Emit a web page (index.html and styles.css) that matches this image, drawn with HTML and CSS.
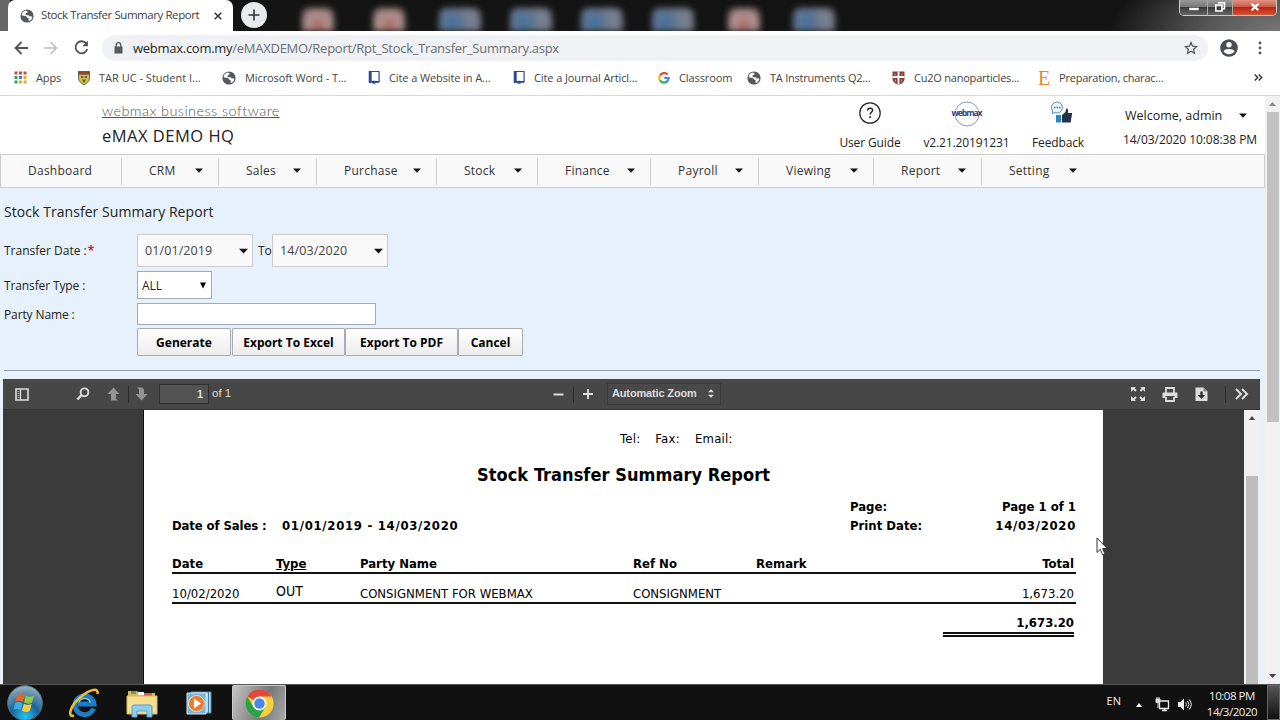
FILE: index.html
```html
<!DOCTYPE html>
<html lang="en">
<head>
  <meta charset="UTF-8" />
  <title>Stock Transfer Summary Report</title>
  <link rel="stylesheet" href="styles.css">
</head>
<body>
  <svg class="defs" width="0" height="0">
    <symbol id="globe" viewBox="0 0 14 14">
      <circle cx="7" cy="7" r="6.6" fill="#55585c"/>
      <path d="M2 4.2C3 2.6 4.5 1.7 6 1.6l1.6 1-.3 1.2-1.6.5-.3 1.3 1.3.6h2l1 1.2 1.7-.2.9.8c-.3 2-1.6 3.5-3.3 4l-.6-1.6.4-1.2-1.5-.5-.9-1.5-2.6-.5L1.7 6.300z" fill="#fff"/>
      <path d="M8.200 1.500l2.500 1.400-1 1.300-1.500-.6z" fill="#55585c"/>
    </symbol>
    <symbol id="book" viewBox="0 0 13 15">
      <path d="M1.500 1h10.500v11H3a1.500 1.500 0 0 0-1.500 1.500z" fill="#fff" stroke="#2c4a94" stroke-width="1.300"/>
      <path d="M1 1h3v11H1z" fill="#2c4a94"/>
      <path d="M1.500 12.500h10.500" stroke="#2c4a94" stroke-width="1.500"/>
      <path d="M5 11h3v4l-1.500-1.200L5 15z" fill="#2c4a94"/>
    </symbol>
    <symbol id="caret" viewBox="0 0 8 5"><path d="M0 .5h8L4 4.800z" fill="#111"/></symbol>
  </svg>

  <!-- Window title bar -->
  <div class="titlebar">
    <div class="tab">
      <svg width="14" height="14"><use href="#globe"/></svg>
      <span class="tab-title">Stock Transfer Summary Report</span>
      <svg width="8" height="8" viewBox="0 0 8 8"><path d="M.7.7l6.600 6.600M7.300.7L.7 7.300" stroke="#333" stroke-width="1.500"/></svg>
    </div>
    <div class="new-tab">
      <svg width="12" height="12" viewBox="0 0 12 12"><path d="M6 .5v11M.5 6h11" stroke="#333" stroke-width="1.600"/></svg>
    </div>
    <div class="behind">
      <i class="pdf"></i><i class="pdf"></i><i></i><i></i><i></i><i></i><i class="pdf"></i><i></i>
    </div>
    <div class="win-buttons">
      <span class="min"><svg width="12" height="6" viewBox="0 0 12 6"><path d="M1 1.500h10v3H1z" fill="#fff" stroke="#444" stroke-width=".6"/></svg></span>
      <span class="max"><svg width="12" height="12" viewBox="0 0 12 12"><path d="M4 1.800h6.500v6H8.500M1.800 4h6.200v6H1.800z" fill="none" stroke="#fff" stroke-width="1.600"/></svg></span>
      <span class="close"><svg width="10" height="8" viewBox="0 0 10 8"><path d="M1.500.7l7 6.600M8.500.7l-7 6.600" stroke="#fff" stroke-width="2.300"/></svg></span>
    </div>
  </div>

  <!-- Address bar -->
  <div class="toolbar">
    <div class="nav-icons">
      <svg width="14" height="14" viewBox="0 0 14 14"><path d="M14 7H1.500M7.500 1L1.500 7l6 6" fill="none" stroke="#505358" stroke-width="1.800"/></svg>
      <svg width="14" height="14" viewBox="0 0 14 14"><path d="M0 7h12.500M6.500 1l6 6-6 6" fill="none" stroke="#bcbec1" stroke-width="1.600"/></svg>
      <svg width="15" height="15" viewBox="0 0 15 15"><path d="M12.300 3.600A6 6 0 1 0 13.300 9" fill="none" stroke="#505358" stroke-width="1.800"/><path d="M13.900.8v5.500H8.400z" fill="#505358"/></svg>
    </div>
    <div class="omnibox">
      <svg width="9" height="12" viewBox="0 0 9 12"><path d="M.5 4.500h8V11.500h-8z" fill="#55585c"/><path d="M2.200 5V3a2.300 2.300 0 0 1 4.600 0v2" fill="none" stroke="#55585c" stroke-width="1.300"/></svg>
      <span class="url"><b>webmax.com.my</b>/eMAXDEMO/Report/Rpt_Stock_Transfer_Summary.aspx</span>
      <svg width="14" height="14" viewBox="0 0 14 14"><path d="M7 1.500l1.600 3.700 4 .4-3 2.700.9 4L7 10.200l-3.500 2.100.9-4-3-2.700 4-.4z" fill="none" stroke="#505358" stroke-width="1.200"/></svg>
    </div>
    <svg class="avatar" width="18" height="18" viewBox="0 0 18 18"><circle cx="9" cy="9" r="8.800" fill="#4a4d51"/><circle cx="9" cy="5.800" r="2.700" fill="#fff"/><path d="M3.500 12.200c1.500-3 9.500-3 11 0-2.500 4-8.500 4-11 0z" fill="#fff"/></svg>
    <svg width="4" height="14" viewBox="0 0 4 14"><g fill="#505358"><circle cx="2" cy="2" r="1.400"/><circle cx="2" cy="7" r="1.400"/><circle cx="2" cy="12" r="1.400"/></g></svg>
  </div>

  <div class="bookmarks">
    <span><svg width="13" height="13" viewBox="0 0 13 13"><path d="M.5.5h3v3h-3zM5 .5h3v3H5zM9.500.5h3v3h-3z" fill="#d8453a"/><path d="M.5 5h3v3h-3z" fill="#3c9d55"/><path d="M5 5h3v3H5z" fill="#3b7de0"/><path d="M9.500 5h3v3h-3zM9.500 9.500h3v3h-3zM5 9.500h3v3H5z" fill="#e6ac25"/><path d="M.5 9.500h3v3h-3z" fill="#3c9d55"/></svg>Apps</span>
    <span class="wide"><svg width="12" height="14" viewBox="0 0 12 14"><path d="M.5.5h11V7c0 3.500-3 5.500-5.500 6.700C3.500 12.500.5 10.500.5 7z" fill="#e3bd35" stroke="#5b6a55"/><path d="M.5.5h11v3.300H.5z" fill="#8d4935"/><path d="M3 5h2.300v2H3zM6.700 5H9v2H6.700z" fill="#27699a"/><path d="M4 8.500h4L6 12z" fill="#3e5a45"/></svg>TAR UC - Student I...</span>
    <span><svg width="14" height="14"><use href="#globe"/></svg>Microsoft Word - T...</span>
    <span><svg width="12" height="15"><use href="#book"/></svg>Cite a Website in A...</span>
    <span><svg width="12" height="15"><use href="#book"/></svg>Cite a Journal Articl...</span>
    <span><svg width="12" height="12" viewBox="0 0 12 12" fill="none" stroke-width="2.200"><path d="M9.700 2.600A4.700 4.700 0 0 0 2 3.600" stroke="#ea4335"/><path d="M2 3.500a4.700 4.700 0 0 0 0 5" stroke="#fbbc05"/><path d="M2 8.400a4.700 4.700 0 0 0 7.200 1" stroke="#34a853"/><path d="M9 9.600c1.200-1 1.700-2.200 1.700-3.600H6.200" stroke="#4285f4"/></svg>Classroom</span>
    <span class="tight"><svg width="14" height="14"><use href="#globe"/></svg>TA Instruments Q2...</span>
    <span class="tight"><svg width="13" height="14" viewBox="0 0 13 14"><path d="M.5.5h12V8c0 3-3.500 5-6 5.700C4 13 .5 11 .5 8z" fill="#8e3d3a"/><path d="M6.500.5v13M.5 6h12" stroke="#fff" stroke-width="1.800"/><path d="M3 2.500v2M10 2.500v2M3.500 8.500v2M9.500 8.500v2" stroke="#c9a19c"/></svg>Cu2O nanoparticles...</span>
    <span class="tight"><em>E</em>Preparation, charac...</span>
    <span class="more"><svg width="9" height="7" viewBox="0 0 9 7"><path d="M.7.5l3 3-3 3M4.700.5l3 3-3 3" fill="none" stroke="#333" stroke-width="1.400"/></svg></span>
  </div>

  <!-- Page content -->
  <div class="viewport">
    <div class="page">
      <div class="header">
        <div class="brand">
          <a>webmax business software</a>
          <span>eMAX DEMO HQ</span>
        </div>
        <div class="tool guide">
          <svg width="24" height="24" viewBox="0 0 24 24"><circle cx="12" cy="12" r="10.200" fill="none" stroke="#222" stroke-width="1.200"/><path d="M9.600 9.600c0-3.400 5-3.100 5-.3 0 2-2.500 2-2.500 4.300" fill="none" stroke="#222" stroke-width="1.500"/><circle cx="12.100" cy="16" r="1" fill="#222"/></svg>
          <span>User Guide</span>
        </div>
        <div class="tool version">
          <svg width="34" height="26" viewBox="0 0 34 26"><circle cx="17" cy="13" r="12" fill="none" stroke="#8799b7" stroke-width="1"/><path d="M1 9.500h32v5H1z" fill="#fff"/><text x="17" y="14.500" text-anchor="middle" textLength="31" class="logo-text">webmax</text></svg>
          <span>v2.21.20191231</span>
        </div>
        <div class="tool feedback">
          <svg width="24" height="24" viewBox="0 0 24 24"><path d="M4 11.500L2.500 13l.2-3A5.500 5.500 0 1 1 7 12z" fill="#eef7fc" stroke="#4a94bd"/><path d="M4 6.500h1.500M6.500 6.500H8M9 6.500h1.500" stroke="#2876a8" stroke-width="1.300"/><path d="M6 14h5v7.500H6z" fill="#2b86be"/><path d="M12 14l3.500-3 .7-3.500c2-.2 2.300 1.800 1.600 4.500h4.400l-1.600 9.500H12z" fill="#21344c"/></svg>
          <span>Feedback</span>
        </div>
        <div class="user">
          <div>Welcome, admin <svg width="8" height="5"><use href="#caret"/></svg></div>
          <span>14/03/2020 10:08:38 PM</span>
        </div>
      </div>

      <div class="menu">
        <div>Dashboard</div>
        <div>CRM <svg width="8" height="5"><use href="#caret"/></svg></div>
        <div>Sales <svg width="8" height="5"><use href="#caret"/></svg></div>
        <div>Purchase <svg width="8" height="5"><use href="#caret"/></svg></div>
        <div>Stock <svg width="8" height="5"><use href="#caret"/></svg></div>
        <div>Finance <svg width="8" height="5"><use href="#caret"/></svg></div>
        <div>Payroll <svg width="8" height="5"><use href="#caret"/></svg></div>
        <div>Viewing <svg width="8" height="5"><use href="#caret"/></svg></div>
        <div>Report <svg width="8" height="5"><use href="#caret"/></svg></div>
        <div>Setting <svg width="8" height="5"><use href="#caret"/></svg></div>
      </div>

      <div class="form">
        <h1>Stock Transfer Summary Report</h1>
        <div class="row dates">
          <label>Transfer Date : <b>*</b></label>
          <div class="date">01/01/2019 <svg width="9" height="6"><use href="#caret"/></svg></div>
          <span class="to">To</span>
          <div class="date">14/03/2020 <svg width="9" height="6"><use href="#caret"/></svg></div>
        </div>
        <div class="row type">
          <label>Transfer Type :</label>
          <div class="select">ALL <svg width="6" height="7" viewBox="0 0 6 7"><path d="M0 .5h6L3 6.500z"/></svg></div>
        </div>
        <div class="row party">
          <label>Party Name :</label>
          <input type="text">
        </div>
        <div class="row actions">
          <button class="b1">Generate</button>
          <button class="b2">Export To Excel</button>
          <button class="b2">Export To PDF</button>
          <button class="b3">Cancel</button>
        </div>
      </div>

      <!-- PDF viewer -->
      <div class="viewer">
        <div class="pdf-bar">
          <svg class="side" width="14" height="13" viewBox="0 0 14 13"><path d="M1 1h12v11H1z" fill="none" stroke="#ddd" stroke-width="1.600"/><path d="M5.500 1v11" stroke="#ddd" stroke-width="1.200"/><path d="M2.500 3.500h2M2.500 5.500h2M2.500 7.500h2M2.500 9.500h2" stroke="#aaa"/></svg>
          <svg class="find" width="14" height="14" viewBox="0 0 14 14"><circle cx="8.500" cy="5.300" r="3.900" fill="none" stroke="#ddd" stroke-width="1.900"/><path d="M5.500 8.200L1.300 12.500" stroke="#ddd" stroke-width="2.400"/></svg>
          <svg class="up" width="13" height="14" viewBox="0 0 13 14"><path d="M6.500.5l6 6.500H9v4.500l2 2H4V7H.5z" fill="#949494"/></svg>
          <i></i>
          <svg class="down" width="13" height="14" viewBox="0 0 13 14"><path d="M6.500 13.500l6-6.500H9V2.500L7 .5H2l2 2V7H.5z" fill="#949494"/></svg>
          <span class="page-no">1</span>
          <span class="page-of">of 1</span>
          <svg class="minus" width="11" height="11" viewBox="0 0 11 11"><path d="M.5 5.500h10" stroke="#ddd" stroke-width="2"/></svg>
          <i></i>
          <svg class="plus" width="10" height="10" viewBox="0 0 10 10"><path d="M0 5h10M5 0v10" stroke="#ddd" stroke-width="1.900"/></svg>
          <span class="zoom">Automatic Zoom <svg width="6" height="9" viewBox="0 0 6 9"><path d="M0 3.300h6L3 .3zM0 5.700h6L3 8.700z" fill="#ddd"/></svg></span>
          <div class="pdf-tools">
            <svg width="14" height="14" viewBox="0 0 14 14"><path d="M0 0h5L3.700 1.300l2 2-1.400 1.400-2-2L0 5zM14 0v5l-1.900-2.300-2 2-1.400-1.400 2-2L9 0zM0 14V9l2.300 2.300 2-2 1.400 1.400-2 2L5 14zM14 14H9l1.300-1.300-2-2 1.400-1.400 2 2L14 9z" fill="#ddd"/></svg>
            <svg width="16" height="15" viewBox="0 0 16 15"><path d="M4 6V1h8v5M4 10v4h8v-4" fill="none" stroke="#ddd" stroke-width="1.800"/><path d="M1.500 5.500h13q1 0 1 1V11h-3V9h-9v2H.5V6.500q0-1 1-1z" fill="#ddd"/></svg>
            <svg width="13" height="15" viewBox="0 0 13 15"><path d="M.5.5h8l4 4V14H.5z" fill="#ddd"/><path d="M8.500.5v4h4" fill="#888"/><path d="M5.300 4.500h2.400V8h2.500l-3.700 4-3.700-4h2.500z" fill="#333"/></svg>
            <i></i>
            <svg width="14" height="12" viewBox="0 0 14 12"><path d="M1 1l5 5-5 5M7 1l5 5-5 5" fill="none" stroke="#ddd" stroke-width="2"/></svg>
          </div>
        </div>
        <div class="pdf-body">
          <div class="sheet">
            <div class="contact"><span>Tel:</span><span>Fax:</span><span>Email:</span></div>
            <h2>Stock Transfer Summary Report</h2>
            <div class="meta">
              <div></div><div></div><div>Page:</div><div class="num">Page 1 of 1</div>
              <div class="sales">Date of Sales :</div><div class="spaced">01/01/2019 - 14/03/2020</div><div>Print Date:</div><div class="num spaced">14/03/2020</div>
            </div>
            <div class="line head">
              <div>Date</div><div><u>Type</u></div><div>Party Name</div><div>Ref No</div><div>Remark</div><div class="num">Total</div>
            </div>
            <div class="line item">
              <div>10/02/2020</div><div class="out">OUT</div><div>CONSIGNMENT FOR WEBMAX</div><div>CONSIGNMENT</div><div></div><div class="num">1,673.20</div>
            </div>
            <div class="total">1,673.20</div>
          </div>
          <div class="pdf-scroll">
            <svg width="6" height="4" viewBox="0 0 6 4"><path d="M3 0l3 4H0z" fill="#444"/></svg>
            <div></div>
          </div>
        </div>
      </div>
    </div>
    <div class="scroll">
      <svg width="7" height="4" viewBox="0 0 7 4"><path d="M3.500 0L7 4H0z" fill="#888"/></svg>
      <div></div>
      <svg width="7" height="4" viewBox="0 0 7 4"><path d="M3.500 4L0 0h7z" fill="#444"/></svg>
    </div>
  </div>

  <div class="taskbar">
    <svg class="orb" width="36" height="36" viewBox="0 0 36 36">
      <defs><radialGradient id="orb-bg" cy=".9" r=".9"><stop offset="0" stop-color="#25c5f2"/><stop offset=".45" stop-color="#17649c"/><stop offset="1" stop-color="#9eb1bd"/></radialGradient></defs>
      <circle cx="18" cy="18" r="17.300" fill="url(#orb-bg)" stroke="#51758b"/>
      <path d="M10 10.500c2.500-2 5-2 7.500-.5L15.800 17c-2.500-1.500-5-1.500-7.300-.2z" fill="#ee6428"/>
      <path d="M18.700 10.600c2.300 1.500 5 1.700 8.300.2L25 17.800c-2.700 1.300-5.300 1-8-.3z" fill="#94c83e"/>
      <path d="M8.200 18c2.500-1.300 5-1.300 7.300.2l-1.700 7c-2.500-1.500-5-1.700-7.600-.4z" fill="#3caee8"/>
      <path d="M16.700 18.800c2.600 1.300 5.300 1.500 8 .3l-2 7c-2.700 1.300-5 1.200-7.700-.3z" fill="#fccb3b"/>
    </svg>
    <svg class="ie" width="32" height="30" viewBox="0 0 32 30">
      <path d="M25.500 20.500A9.500 9.500 0 1 1 26 16H10" fill="none" stroke="#1d7cc4" stroke-width="5"/>
      <path d="M11 14.500c1-5.500 10-5.500 11.500 0" fill="none" stroke="#73c8f2" stroke-width="1.500"/>
      <path d="M6 27.500C-1 30 2 18 12 9.500S31-1 29.500 6" fill="none" stroke="#edbd33" stroke-width="2.600"/>
    </svg>
    <svg class="folder" width="32" height="30" viewBox="0 0 32 30">
      <path d="M2 3h9l2 2h16v7H2z" fill="#d9b960"/><path d="M5 3h5v3H5z" fill="#64a647"/><path d="M12 4h6v3h-6z" fill="#fff"/><path d="M18 5h8v3h-8z" fill="#d95c47"/>
      <path d="M1 8h30v18H1z" fill="#f5df91" stroke="#d9ba61"/>
      <path d="M6 29V19q0-2 2-2h16q2 0 2 2v10h-5v-6H11v6z" fill="#8fcdf0" stroke="#5d9fc9"/>
    </svg>
    <svg class="wmp" width="26" height="26" viewBox="0 0 26 26">
      <path d="M5 2h20v21H5z" fill="#b9dcee" stroke="#4e88ad"/><path d="M22.500 2v21" stroke="#3e7ba5"/>
      <path d="M1 3h19v21H1z" fill="#78b5da" stroke="#cfe7f4"/>
      <circle cx="10.500" cy="13.500" r="8" fill="#f07c26" stroke="#fff" stroke-width=".7"/><path d="M8 8.500l7 5-7 5z" fill="#fff"/>
    </svg>
    <div class="active-app">
      <svg width="29" height="29" viewBox="0 0 28 28">
        <circle cx="14" cy="14" r="13.600" fill="#f8cf3d"/>
        <path d="M14 14L2.200 7.200A13.600 13.600 0 0 1 25.800 7.200H14z" fill="#dd4b3e"/>
        <path d="M2.200 7.200A13.600 13.600 0 0 0 13.500 27.600L19.800 17.300 8.200 17.400z" fill="#2ba14b"/>
        <circle cx="14" cy="14" r="6.700" fill="#fff"/><circle cx="14" cy="14" r="5.100" fill="#4b86e8"/>
      </svg>
    </div>
    <div class="tray">
      <span class="lang">EN</span>
      <svg class="tri" width="6" height="4" viewBox="0 0 6 4"><path d="M3 0l3 4H0z" fill="#fff"/></svg>
      <svg class="net" width="15" height="15" viewBox="0 0 15 15"><path d="M5 4h8.500v7.500H4.500V6M7 13.500h5M9.500 11v2" fill="none" stroke="#eee" stroke-width="1.300"/><path d="M1 2h4v3.500H1zM2 0v2M4 0v2M3 5v6" fill="#ddd" stroke="#ddd"/></svg>
      <svg class="vol" width="15" height="15" viewBox="0 0 15 15"><path d="M1 5h2.500L7 1.500v12L3.500 10H1z" fill="#eee"/><path d="M8.700 5.500q1.600 2 0 4M10.500 4q3 3.500 0 7M12.300 2.500q4 5 0 10" fill="none" stroke="#eee"/></svg>
      <div class="clock">10:08 PM<br>14/3/2020</div>
      <div class="show-desktop"></div>
    </div>
  </div>

  <svg class="cursor" width="13" height="20" viewBox="0 0 13 20"><path d="M1 1v14.500l3.300-3.200 2.300 5.500 2.300-1-2.300-5.300h4.600z" fill="#fff" stroke="#333"/></svg>
</body>
</html>
```
FILE: styles.css
```css
* {
  box-sizing: border-box;
}

body {
  margin: 0;
  width: 1280px;
  height: 720px;
  overflow: hidden;
  font-family: "Open Sans", "Noto Sans", sans-serif;
  font-size: 12px;
  color: #222;
  background: #fff;
  display: flex;
  flex-direction: column;
}

svg {
  display: block;
  flex: none;
}

.defs {
  position: absolute;
}

/* title bar */
.titlebar {
  height: 31px;
  flex: none;
  display: flex;
  background: linear-gradient(90deg, #666 0, #666 10px, transparent 10px),
    radial-gradient(ellipse 170px 70px at 1280px 31px, #777 0, #555 45%, #141414 100%);
}

.tab {
  width: 225px;
  margin-left: 8px;
  padding: 0 11px 0 12px;
  border-radius: 7px 7px 0 0;
  background: #fff;
  display: flex;
  align-items: center;
}

.tab-title {
  width: 158px;
  margin: 0 15px 2px 7px;
  font-size: 11.5px;
  letter-spacing: -0.43px;
  white-space: nowrap;
  color: #3c4043;
}

.new-tab {
  width: 26px;
  height: 26px;
  margin: 2px 0 0 8px;
  border-radius: 50%;
  background: #e8eaee;
  display: flex;
  align-items: center;
  justify-content: center;
}

.behind {
  display: flex;
  align-items: flex-end;
  gap: 29px;
  padding-left: 30px;
  width: 912px;
  overflow: hidden;
}

.behind i {
  width: 42px;
  height: 23px;
  border-radius: 8px 8px 0 0;
  background: radial-gradient(circle at 30% 60%, #42709f 0, #63768f 35%, #7b8191 60%, #6f7583 100%);
  filter: blur(3px);
}

.behind i.pdf {
  width: 32px;
  margin: 0 5px;
  background: radial-gradient(circle at 50% 75%, #a8635e 0, #b09493 45%, #85696a 100%);
}

.behind i:last-child {
  margin-left: -1px;
}

.win-buttons {
  height: 16px;
  width: 98px;
  display: flex;
  border: 1px solid #ccc;
  border-top: 0;
  border-radius: 0 0 5px 5px;
  overflow: hidden;
}

.win-buttons span {
  display: flex;
  align-items: center;
  justify-content: center;
  background: linear-gradient(#999 0, #777 45%, #3c3c3e 50%, #666 100%);
  border-right: 1px solid #aaa;
  width: 28px;
  padding-bottom: 2px;
}

.win-buttons .min {
  padding-top: 4px;
}

.win-buttons .max {
  width: 25px;
}

.win-buttons .close {
  flex: 1;
  border: 0;
  background: linear-gradient(#e19384 0, #cf5a44 45%, #b52711 50%, #d85335 100%);
}

/* address bar */
.toolbar {
  height: 33px;
  flex: none;
  display: flex;
  align-items: center;
  padding: 0 18px 0 14px;
}

.nav-icons {
  display: flex;
  align-items: center;
  gap: 16px;
  width: 88px;
}

.omnibox {
  width: 1106px;
  height: 26px;
  border-radius: 13px;
  background: #eff1f4;
  display: flex;
  align-items: center;
  padding: 0 10px 0 12px;
}

.url {
  flex: 1;
  margin-left: 10px;
  font-size: 13px;
  letter-spacing: -0.27px;
  color: #6b6e72;
}

.url b {
  font-weight: normal;
  color: #26282b;
}

.avatar {
  margin: 0 auto 0 12px;
}

.bookmarks {
  height: 32px;
  flex: none;
  padding: 0 0 4px 14px;
  border-bottom: 1px solid #d9d9d9;
  display: grid;
  grid-template-columns: 64px 144px 146px 145px 145px 89px 145px 146px 216px auto;
  align-items: center;
  font-size: 11px;
  letter-spacing: -0.1px;
  color: #444;
  white-space: nowrap;
}

.bookmarks span {
  display: flex;
  align-items: center;
  gap: 9px;
}

.bookmarks .wide {
  letter-spacing: 0;
}

.bookmarks .tight {
  letter-spacing: -0.22px;
}

.bookmarks em {
  width: 12px;
  font: 20px/20px "Liberation Serif", serif;
  color: #e08a33;
}

/* page */
.viewport {
  height: 588px;
  flex: none;
  display: flex;
}

.page {
  width: 1265px;
  display: flex;
  flex-direction: column;
  background: #e7f1fb;
}

.header {
  height: 58px;
  flex: none;
  display: flex;
  background: #fff;
}

.brand {
  width: 724px;
  padding-left: 102px;
}

.brand a {
  display: block;
  margin-top: 5px;
  font: 300 14.5px/19px Lato, sans-serif;
  letter-spacing: 0.43px;
  color: #555;
  text-decoration: underline;
}

.brand span {
  display: block;
  line-height: 22px;
  margin-top: 5px;
  font-size: 16.5px;
  letter-spacing: 0.5px;
}

.tool {
  display: flex;
  flex-direction: column;
  align-items: center;
  justify-content: space-between;
  padding: 5px 0 2px;
  white-space: nowrap;
}

.tool span {
  line-height: 19px;
  letter-spacing: -0.12px;
}

.guide {
  width: 92px;
  margin-left: 100px;
}

.version {
  width: 101px;
}

.feedback {
  width: 82px;
}

.feedback svg {
  margin-left: 8px;
}

.logo-text {
  font: bold 8.5px "Open Sans", sans-serif;
  fill: #26408b;
}

.user {
  margin-left: 24px;
  padding-top: 9px;
  white-space: nowrap;
}

.user div {
  display: flex;
  justify-content: space-between;
  align-items: center;
  width: 122px;
  margin-left: 2px;
  height: 20px;
  font-size: 12.5px;
}

.user span {
  display: block;
  margin-top: 5px;
  line-height: 20px;
  letter-spacing: -0.06px;
}

.menu {
  height: 34px;
  flex: none;
  display: grid;
  grid-template-columns: 121px 97px 98px 120px 101px 113px 108px 115px 108px 110px;
  align-items: center;
  border: 1px solid #ccc;
  background: #f9f9f9;
  letter-spacing: 0.25px;
  color: #333;
}

.menu div {
  height: 27px;
  display: flex;
  align-items: center;
  justify-content: space-between;
  padding: 0 15px 1px 27px;
  border-right: 1px solid #ccc;
}

.menu div:last-child {
  border: 0;
}

.form {
  height: 183px;
  flex: none;
  margin: 0 5px 0 4px;
  border-bottom: 1px solid #929dab;
}

.form h1 {
  margin: 12px 0 11px;
  font-size: 14px;
  font-weight: normal;
  line-height: 23px;
  letter-spacing: 0.06px;
}

.row {
  display: flex;
  align-items: center;
}

.row label {
  width: 133px;
}

.row label b {
  color: #d9222a;
  margin-left: -2px;
}

.dates {
  height: 33px;
}

.date {
  width: 116px;
  height: 33px;
  padding: 0 4px 0 7px;
  border: 1px solid #ccc;
  background: #f9f9f9;
  display: flex;
  align-items: center;
  justify-content: space-between;
  font-size: 12.5px;
  letter-spacing: 0.1px;
  color: #444;
}

.to {
  width: 19px;
  padding-left: 5px;
}

.type {
  margin-top: 4px;
  height: 28px;
}

.type label,
.party label {
  letter-spacing: -0.12px;
}

.select {
  width: 75px;
  height: 28px;
  padding: 0 5px 0 4px;
  border: 1px solid #a3a9b0;
  background: #fff;
  display: flex;
  align-items: center;
  justify-content: space-between;
}

.party {
  margin-top: 4px;
  height: 22px;
}

.party input {
  width: 239px;
  height: 22px;
  border: 1px solid #a3a9b0;
  background: #fff;
}

.actions {
  margin-top: 3px;
  padding-left: 133px;
}

.actions button {
  height: 28px;
  padding: 0;
  border: 1px solid #a9adb2;
  border-radius: 1px;
  background: linear-gradient(#fff, #ececec);
  font: bold 12px "Open Sans", sans-serif;
  color: #000;
}

.actions .b1 {
  width: 94px;
  margin-right: 1px;
}

.actions .b2 {
  width: 113px;
}

.actions .b3 {
  width: 65px;
}

/* pdf viewer */
.viewer {
  margin: 8px 5px 0 3px;
  flex: 1;
  display: flex;
  flex-direction: column;
  min-height: 0;
}

.pdf-bar {
  height: 31px;
  flex: none;
  display: flex;
  align-items: center;
  padding: 0 11px 0 12px;
  background: #474747;
  border-bottom: 1px solid #333;
  color: #ddd;
  font: 12px "Liberation Sans", sans-serif;
}

.pdf-bar i {
  width: 1px;
  height: 17px;
  background: #2c2c2c;
}

.find {
  margin-left: 47px;
}

.up {
  margin: 0 8px 0 17px;
}

.down {
  margin: 0 11px 0 6px;
}

.page-no {
  width: 50px;
  height: 20px;
  padding-right: 5px;
  line-height: 18px;
  text-align: right;
  border: 1px solid #2f2f2f;
  background: #535353;
  font-size: 11px;
  font-weight: bold;
}

.page-of {
  width: 350px;
  padding: 0 0 2px 3px;
  font-size: 11.5px;
}

.pdf-bar .minus {
  margin-left: -6px;
  margin-right: 9px;
}

.pdf-bar .plus {
  margin: 0 14px 0 9px;
}

.zoom {
  width: 114px;
  height: 22px;
  padding: 0 6px 2px 4px;
  display: flex;
  align-items: center;
  justify-content: space-between;
  border: 1px solid #393939;
  background: #494949;
  white-space: nowrap;
  font-size: 11px;
  font-weight: bold;
  letter-spacing: -0.15px;
}

.pdf-tools {
  margin-left: auto;
  display: flex;
  align-items: center;
  gap: 17px;
}

.pdf-tools i {
  margin-right: -8px;
}

.pdf-body {
  flex: 1;
  display: flex;
  justify-content: space-between;
  background: #3b3b3b;
}

.sheet {
  width: 960px;
  margin-left: 140px;
  padding: 20px 27px 0 28px;
  border-left: 1px solid #111;
  background: #fff;
  font-family: "DejaVu Sans Condensed", "DejaVu Sans", sans-serif;
  font-stretch: condensed;
  font-size: 13px;
  color: #000;
}

.contact {
  display: flex;
  gap: 15px;
  padding-left: 448px;
  line-height: 18px;
  letter-spacing: 0.25px;
}

.sheet h2 {
  margin: 14px 0 11px;
  line-height: 26px;
  padding-left: 305px;
  font-size: 18px;
  letter-spacing: 0.06px;
  white-space: nowrap;
}

.meta {
  display: grid;
  grid-template-columns: 110px 568px 1fr auto;
  grid-auto-rows: 19px;
  line-height: 15px;
  font-weight: bold;
}

.sales {
  letter-spacing: -0.12px;
}

.spaced {
  letter-spacing: 0.7px;
}

.num {
  text-align: right;
}

.line {
  display: grid;
  grid-template-columns: 104px 84px 273px 123px 220px 1fr;
  align-items: end;
  border-bottom: 2px solid #111;
  white-space: nowrap;
  line-height: 16px;
}

.head {
  margin-top: 19px;
  height: 18px;
  font-weight: bold;
}

.item {
  height: 30px;
}

.line .num {
  padding-right: 2px;
}

.out {
  font-size: 14px;
  padding-bottom: 3px;
}

.total {
  width: 131px;
  height: 33px;
  margin: 0 2px 0 auto;
  padding-top: 11px;
  line-height: 16px;
  text-align: right;
  font-weight: bold;
  border-bottom: 5px double #111;
}

.pdf-scroll {
  width: 16px;
  padding: 6px 2px 0;
  background: #f0f0f0;
  display: flex;
  flex-direction: column;
  align-items: center;
}

.pdf-scroll div {
  margin-top: 56px;
  width: 12px;
  flex: 1;
  background: #bdbdbd;
}

.scroll {
  width: 15px;
  padding: 6px 1px;
  background: #f1f1f1;
  display: flex;
  flex-direction: column;
  align-items: center;
  justify-content: space-between;
}

.scroll div {
  width: 12px;
  height: 310px;
  margin: 6px 0 auto;
  background: #c1c1c1;
}

/* taskbar */
.taskbar {
  height: 36px;
  flex: none;
  display: flex;
  align-items: center;
  padding-left: 7px;
  background: #111;
  border-top: 1px solid #555;
}

.ie {
  margin-left: 25px;
}

.folder {
  margin-left: 26px;
}

.wmp {
  margin-left: 28px;
}

.active-app {
  width: 54px;
  height: 35px;
  margin-left: 20px;
  border: 1px solid #ccc;
  border-bottom: 0;
  border-radius: 2px;
  background: linear-gradient(110deg, #c4c4c4, #777 60%, #aaa);
  display: flex;
  align-items: center;
  justify-content: center;
}

.tray {
  margin-left: auto;
  height: 35px;
  display: flex;
  align-items: center;
  color: #eee;
}

.lang {
  margin-bottom: 4px;
  font-size: 11px;
}

.tri {
  margin: 4px 15px 0 15px;
}

.net {
  margin: 3px 7px 0 -2px;
}

.vol {
  margin-top: 3px;
}

.clock {
  width: 75px;
  padding: 2px 0 0 5px;
  text-align: center;
  font-size: 11.5px;
  letter-spacing: -0.45px;
  line-height: 16px;
}

.show-desktop {
  width: 13px;
  height: 35px;
  border: 1px solid #666;
  background: linear-gradient(#555, #111);
}

.cursor {
  position: absolute;
  left: 1096px;
  top: 537px;
}
```
